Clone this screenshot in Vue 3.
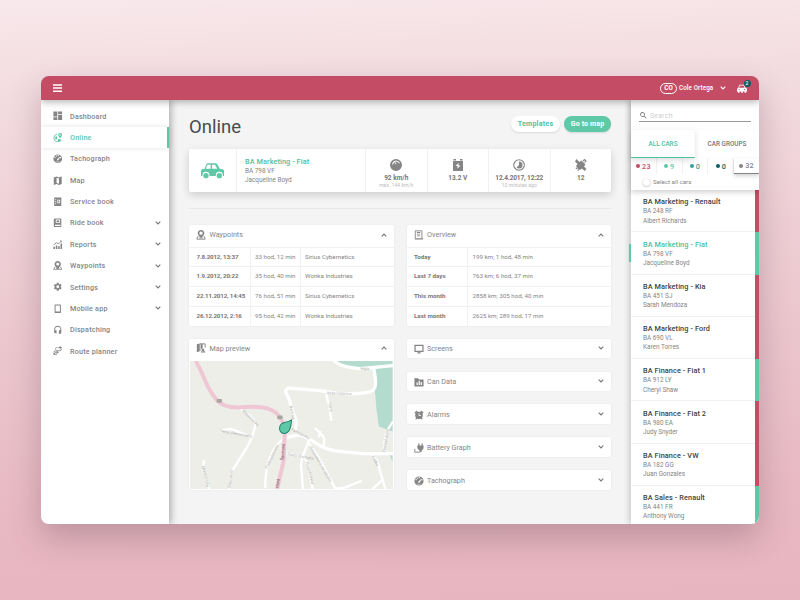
<template>
  <div class="page">
    <div class="window">
      <header class="topbar">
        <svg class="burger" viewBox="0 0 9 8"><path d="M0 .2h9v1.5H0zM0 3.3h9v1.5H0zM0 6.4h9v1.5H0z" /></svg>
        <div class="user">
          <span class="initials">CO</span>
          <span class="user-name">Cole Ortega</span>
          <svg class="chevron white" viewBox="0 0 6 4"><path d="M.7.7 3 3 5.3.7" /></svg>
          <div class="car-alert">
            <svg viewBox="0 0 24 20"><path fill-rule="evenodd" d="M6 1h11l3 7h2l2 3v6h-2v3h-4v-3h-4v3h-4v-3H6v3H2v-3H0v-6l3-3zM7 3 5 8h13l-2-5zM5 11a1.500 1.500 0 1 0 .1 0zM18 11a1.500 1.500 0 1 0 .1 0z" /></svg>
            <span class="alert-count">2</span>
          </div>
        </div>
      </header>

      <div class="body">
        <nav class="sidebar">
          <a v-for="item in menu" :key="item.label" class="nav-item" :class="{ active: item.active }">
            <svg class="icon" viewBox="0 0 24 24">
              <path class="fill" :d="icons[item.icon].fill" />
              <path class="line" :d="icons[item.icon].line" />
            </svg>
            <span class="nav-label">{{ item.label }}</span>
            <svg v-if="item.sub" class="chevron" viewBox="0 0 6 4"><path d="M.7.7 3 3 5.3.7" /></svg>
          </a>
        </nav>

        <main class="content">
          <div class="title-row">
            <h1>Online</h1>
            <button class="btn">Templates</button>
            <button class="btn primary">Go to map</button>
          </div>

          <section class="car-card">
            <div class="car-picture">
              <svg viewBox="0 0 70 47">
                <path d="M0 24q0-6 6-6l5-1 5-13q1-3 5-3h22q4 0 6 3l7 13 8 2q6 1 6 7v13H0z" />
                <path class="hole" d="M19 5h10v12H14.500zM33 5h9l7 12H33z" />
                <circle class="hole" cx="15" cy="37" r="10.500" /><circle class="hole" cx="55" cy="37" r="10.500" />
                <circle cx="15" cy="38" r="8" /><circle cx="55" cy="38" r="8" />
              </svg>
            </div>
            <div class="car-info">
              <strong>BA Marketing - Fiat</strong>
              <span>BA 798 VF</span>
              <span>Jacqueline Boyd</span>
            </div>
            <div v-for="s in stats" :key="s.icon" class="stat">
              <svg class="icon" viewBox="0 0 24 24">
                <path class="fill" :d="icons[s.icon].fill" />
                <path class="line" :d="icons[s.icon].line" />
              </svg>
              <b>{{ s.value }}</b>
              <small>{{ s.note }}</small>
            </div>
          </section>

          <hr />

          <div class="columns">
            <div class="column">
              <section class="panel">
                <div class="panel-head">
                  <svg class="icon" viewBox="0 0 24 24"><path class="fill" :d="icons.waypoint.fill" /><path class="line" :d="icons.waypoint.line" /></svg>
                  <span>Waypoints</span>
                  <svg class="chevron" viewBox="0 0 6 4"><path d="M.7 3.300 3 1 5.300 3.300" /></svg>
                </div>
                <div v-for="w in waypoints" :key="w[0]" class="row three">
                  <b>{{ w[0] }}</b><span>{{ w[1] }}</span><span>{{ w[2] }}</span>
                </div>
              </section>

              <section class="panel map-panel">
                <div class="panel-head">
                  <svg class="icon" viewBox="0 0 24 24"><path class="fill" :d="icons.mapPreview.fill" /><path class="line" :d="icons.mapPreview.line" /></svg>
                  <span>Map preview</span>
                  <svg class="chevron" viewBox="0 0 6 4"><path d="M.7 3.300 3 1 5.300 3.300" /></svg>
                </div>
                <svg class="map" viewBox="30 93 608 383" preserveAspectRatio="none">
                  <path class="park" d="M466 93q20 19 75 22l97-8V93zM584 118l54-10v196l-41-15-7-50-5-58zM630 374h8v22z" />
                  <g class="road">
                    <path class="wide" d="M464 93q16 18 76 23l98-9" />
                    <path class="wide" d="M582 118q6 28 5 46-1 18-22 22-35 8-90 3l-60-8-88-7q-12 2-9 15 12 19 14 34 5 25 15 43 4 9-1 30" />
                    <path class="wide" d="M314 323l41-9q18 2 32 12l38 23q25 13 60 15l65 6h88" />
                    <path d="M438 184q4 30 10 40l6 45M184 238q16 14 28 20 17 14 13 34-10 40-34 75l-39 62-4 47M122 304q20-12 40-5l48 20" />
                    <path d="M314 323q-30 22-41 52-17 32-17 95M387 330l-17 45q-10 20-5 50l4 50M388 340q10 16 25 36l30 55 24 45" />
                    <path d="M325 371l45 8q20 24 18 50l10 47M72 392q-5 28 3 44l12 40M407 295l24 25q4 12 0 26M422 305l-5 14M574 370q22 20 25 48l18 58M606 450l-28 26M544 452l-50 20-25 2M638 276q-25 30-27 87" />
                  </g>
                  <path class="highway" d="M47 93q13 22 24 48 17 43 38 67 20 24 65 24 60-6 92 4 27 8 40 36 10 15 8 51l-3 70q-10 40-20 86" />
                  <g class="shield"><rect x="110" y="207" width="16" height="11" rx="3" /><rect x="292" y="256" width="16" height="11" rx="3" /></g>
                  <text v-for="(l, i) in mapLabels" :key="i" :class="{ dark: l.dark }" :transform="`translate(${l.x} ${l.y}) rotate(${l.r})`">{{ l.t }}</text>
                  <path class="marker" d="M335 269q-1 19-6 30-7 12-18 11-13-3-12-18 2-12 14-15 12-2 22-8z" />
                </svg>
              </section>
            </div>

            <div class="column">
              <section class="panel">
                <div class="panel-head">
                  <svg class="icon" viewBox="0 0 24 24"><path class="fill" :d="icons.overview.fill" /><path class="line" :d="icons.overview.line" /></svg>
                  <span>Overview</span>
                  <svg class="chevron" viewBox="0 0 6 4"><path d="M.7 3.300 3 1 5.300 3.300" /></svg>
                </div>
                <div v-for="o in overview" :key="o[0]" class="row two">
                  <b>{{ o[0] }}</b><span>{{ o[1] }}</span>
                </div>
              </section>
              <section v-for="p in closedPanels" :key="p.label" class="panel closed">
                <div class="panel-head">
                  <svg class="icon" viewBox="0 0 24 24"><path class="fill" :d="icons[p.icon].fill" /><path class="line" :d="icons[p.icon].line" /></svg>
                  <span>{{ p.label }}</span>
                  <svg class="chevron" viewBox="0 0 6 4"><path d="M.7.7 3 3 5.3.7" /></svg>
                </div>
              </section>
            </div>
          </div>
        </main>

        <aside class="cars">
          <div class="cars-head">
            <label class="search">
              <svg viewBox="0 0 24 24"><path d="M15.500 14h-.8l-.3-.3A6.500 6.500 0 1 0 13.700 14.400l.3.3v.8l5 5 1.500-1.500zm-6 0a4.500 4.500 0 1 1 0-9 4.500 4.500 0 0 1 0 9z" /></svg>
              <span>Search</span>
            </label>
            <div class="tabs">
              <span class="tab active">ALL CARS</span>
              <span class="tab">CAR GROUPS</span>
            </div>
            <div class="counts">
              <span v-for="(c, i) in counts" :key="i" class="count" :class="c.type"><i></i>{{ c.n }}</span>
            </div>
            <div class="select-all"><i></i>Select all cars</div>
          </div>
          <div class="car-list">
            <div v-for="c in cars" :key="c.plate" class="car" :class="{ online: c.online, selected: c.selected }">
              <strong>{{ c.name }}</strong>
              <span>{{ c.plate }}</span>
              <span>{{ c.driver }}</span>
            </div>
          </div>
        </aside>
      </div>
    </div>
  </div>
</template>

<script setup>
import { ref } from 'vue';

const gauge = 'M12 1a11 11 0 1 0 0 22 11 11 0 0 0 0-22zM5 10a1.500 1.500 0 1 1 .1 0zM8.500 6.500a1.500 1.500 0 1 1 .1 0zM13 5.500a1.500 1.500 0 1 1 .1 0zM19 10.500a1.500 1.500 0 1 1 .1 0zM10 14l7-7 1 1-5 8q-3 2-3-2zM6 18q6 3 12 0l-2 2q-4 2-8 0z';

const icons = {
  dashboard: { fill: 'M1 1h10v13H1zM1 16h10v7H1zM13 1h10v7H13zM13 10h10v13H13z' },
  online: { fill: 'M18 0a5 5 0 0 0-5 5q0 3 5 8 5-5 5-8a5 5 0 0 0-5-5zm0 3a2 2 0 1 1 0 4 2 2 0 0 1 0-4zM7 8l3 1 1 4-3 4-3-3zM13 15h6v4l-4 3h-3z', line: 'M10 3Q2 5 2 13q1 7 8 9 7 1 11-4' },
  gauge: { fill: gauge },
  map: { fill: 'M20.500 1.500 15 4 9 1.500 2 4v18.500L9 20l6 2.500 7-2.500V1.500zM15 19.500 9 17.500V4.500l6 2z' },
  service: { fill: 'M3 1h18v22H3zM6 5v3h2V5zM6 10v3h2v-3zM6 15v3h2v-3zM11 7v9h7V7zM13 9h3v5h-3z' },
  ride: { fill: 'M5 1h16v22H5q-3 0-3-3V4q0-3 3-3zM7 4v8h11V4zM5 17v3h14v-3zM9 6h7v4H9z' },
  reports: { fill: 'M1 17h4v6H1zM7 14h4v9H7zM13 16h4v7h-4zM19 9h4v14h-4zM17 1h5v5z', line: 'M2 12l7-5 5 3 6-7' },
  waypoint: { fill: 'M12 0C7.500 0 4 3.500 4 8c0 4 3 6 6 10h4c3-4 6-6 6-10 0-4.500-3.500-8-8-8zm0 3.500a4 4 0 1 1 0 8 4 4 0 0 1 0-8z', line: 'M6 16H4l-2 6h20l-2-6h-2M8 19h8' },
  settings: { fill: 'M19.430 12.980c.04-.32.07-.64.07-.98s-.03-.66-.07-.98l2.110-1.650c.19-.15.24-.42.12-.64l-2-3.460c-.12-.22-.39-.3-.61-.22l-2.490 1c-.52-.4-1.080-.73-1.690-.98l-.38-2.650C14.460 2.180 14.250 2 14 2h-4c-.25 0-.46.18-.49.42l-.38 2.650c-.61.25-1.170.59-1.690.98l-2.490-1c-.23-.09-.49 0-.61.22l-2 3.460c-.13.22-.07.49.12.64l2.110 1.650c-.04.32-.07.65-.07.98s.03.66.07.98l-2.110 1.650c-.19.15-.24.42-.12.64l2 3.460c.12.22.39.3.61.22l2.490-1c.52.4 1.080.73 1.690.98l.38 2.650c.03.24.24.42.49.42h4c.25 0 .46-.18.49-.42l.38-2.650c.61-.25 1.170-.59 1.690-.98l2.490 1c.23.09.49 0 .61-.22l2-3.460c.12-.22.07-.49-.12-.64zM12 15.500a3.500 3.500 0 1 1 0-7 3.500 3.500 0 0 1 0 7z' },
  mobile: { fill: 'M6 1h12q2 0 2 2v18q0 2-2 2H6q-2 0-2-2V3q0-2 2-2zM6.500 4v15h11V4z' },
  headset: { fill: 'M12 2c-5 0-9 4-9 9v7c0 1.700 1.300 3 3 3h3v-8H5.500v-2a6.500 6.500 0 0 1 13 0v2H15v8h2l-3 2h3c2.500 0 4-2 4-4v-8c0-5-4-9-9-9z' },
  route: { fill: 'M17 0l6 4-6 4zM9 12l6 4-6 4zM1 17h4v5H1z', line: 'M8 4h3M13 4h5M21 7q1 5-4 5H7q-5 0-5 4M9 16h-4M8 4Q5 5 7 9M5 21h5' },
  speed: { fill: 'M12 0a12 12 0 1 0 0 24 12 12 0 0 0 0-24zM4 11q1-7 8-8 5 0 8 5l-2 1q-2-4-6-4-5 1-6 6zM9 6l4 2-2 3z' },
  battery: { fill: 'M3 0h5v3H3zM16 0h5v3h-5zM2 4h20v20H2zM13 8l-6 6h4v5l6-6h-4z' },
  clock: { fill: 'M12 5v7l-5 5a7 7 0 0 0 5 2 7 7 0 0 0 0-14z', line: 'M12 1.500a10.500 10.500 0 1 0 .1 0z' },
  satellite: { fill: 'M3 0l6 6 4-3 8 8-3 4 5 5-4 4-5-5-4 3-8-8 3-4-5-5z', line: 'M2 20q2-4 5-1 2 3-2 4M16 4l3-3 3 3-3 3' },
  overview: { fill: 'M7 5h8v2H7zM7 9h8v2H7zM7 13h8v2H7zM2 20h20v3H2z', line: 'M3 20V2h16v18' },
  mapPreview: { fill: 'M2 3l7-2v19l-7 2zM11 1l5 2v9h-2v8l-3-1zM16 13a4 4 0 1 1-.1 0zM12 20h10v3H12z', line: 'M9 2h13v9' },
  screens: { fill: 'M1 2h22v17H1zM4 5v11h16V5zM8 20h8v3H8z' },
  data: { fill: 'M1 3h9l2 3h11v17H1zM6 13v6h3v-6zM11 9v10h3V9zM16 12v7h3v-7z' },
  alarm: { fill: 'M1 6l6-5 2 3-6 5zM23 6l-6-5-2 3 6 5zM12 4a9 9 0 0 1 7 15l2 3-2 1-3-2q-4 2-8 0l-3 2-2-1 2-3a9 9 0 0 1 7-15zM11 8v6h6v-2h-4V8z' },
  plug: { fill: 'M10 1h3v5h5V1h3v5h2v5q0 5-4 6v4h-6v-4q-5-1-5-6V6h2z', line: 'M2 14v8h13' },
};

const menu = ref([
  { label: 'Dashboard', icon: 'dashboard' },
  { label: 'Online', icon: 'online', active: true },
  { label: 'Tachograph', icon: 'gauge' },
  { label: 'Map', icon: 'map' },
  { label: 'Service book', icon: 'service' },
  { label: 'Ride book', icon: 'ride', sub: true },
  { label: 'Reports', icon: 'reports', sub: true },
  { label: 'Waypoints', icon: 'waypoint', sub: true },
  { label: 'Settings', icon: 'settings', sub: true },
  { label: 'Mobile app', icon: 'mobile', sub: true },
  { label: 'Dispatching', icon: 'headset' },
  { label: 'Route planner', icon: 'route' },
]);

const stats = ref([
  { icon: 'speed', value: '92 km/h', note: 'max. 144 km/h' },
  { icon: 'battery', value: '13.2 V', note: '' },
  { icon: 'clock', value: '12.4.2017, 12:22', note: '10 minutes ago' },
  { icon: 'satellite', value: '12', note: '' },
]);

const waypoints = [
  ['7.8.2012, 13:37', '33 hod, 12 min', 'Sirius Cybernetics'],
  ['1.9.2012, 20:22', '35 hod, 40 min', 'Wonka Industries'],
  ['22.11.2012, 14:45', '76 hod, 51 min', 'Sirius Cybernetics'],
  ['26.12.2012, 2:16', '95 hod, 42 min', 'Wonka Industries'],
];

const overview = [
  ['Today', '199 km; 1 hod, 48 min'],
  ['Last 7 days', '763 km; 6 hod, 37 min'],
  ['This month', '2858 km; 305 hod, 40 min'],
  ['Last month', '2625 km; 289 hod, 17 min'],
];

const closedPanels = [
  { label: 'Screens', icon: 'screens' },
  { label: 'Can Data', icon: 'data' },
  { label: 'Alarms', icon: 'alarm' },
  { label: 'Battery Graph', icon: 'plug' },
  { label: 'Tachograph', icon: 'gauge' },
];

const mapLabels = [
  { t: 'Hájik', x: 542, y: 121, r: 0 },
  { t: 'Jurija Gagarina', x: 438, y: 191, r: 3 },
  { t: 'Tichá', x: 445, y: 217, r: 80 },
  { t: 'Banícka', x: 329, y: 228, r: 78 },
  { t: 'Mládežnícka', x: 186, y: 243, r: 45 },
  { t: 'Petra Jilemnického', x: 120, y: 306, r: 10 },
  { t: 'Podhradzovská', x: 262, y: 416, r: -64 },
  { t: 'Partizánska', x: 333, y: 300, r: 27 },
  { t: 'Pavla Országha', x: 323, y: 375, r: 10 },
  { t: 'Hviezdoslava', x: 378, y: 396, r: 76 },
  { t: 'Slovenského národného', x: 388, y: 350, r: 60 },
  { t: 'Mládežnícka', x: 65, y: 408, r: 76 },
  { t: 'Železničná', x: 151, y: 474, r: -82 },
  { t: 'Krátka', x: 576, y: 378, r: 66 },
  { t: 'Pod kalváriou', x: 615, y: 366, r: -80 },
  { t: 'Športová', x: 310, y: 391, r: -85, dark: true },
  { t: 'rtová', x: 295, y: 474, r: -82, dark: true },
];

const counts = [
  { n: 23, type: 'red' },
  { n: 9, type: 'green' },
  { n: 0, type: 'teal' },
  { n: 0, type: 'deep' },
  { n: 32, type: 'all' },
];

const cars = ref([
  { name: 'BA Marketing - Renault', plate: 'BA 248 RF', driver: 'Albert Richards' },
  { name: 'BA Marketing - Fiat', plate: 'BA 798 VF', driver: 'Jacqueline Boyd', online: true, selected: true },
  { name: 'BA Marketing - Kia', plate: 'BA 451 SJ', driver: 'Sarah Mendoza' },
  { name: 'BA Marketing - Ford', plate: 'BA 690 VL', driver: 'Karen Torres' },
  { name: 'BA Finance - Fiat 1', plate: 'BA 912 LY', driver: 'Cheryl Shaw', online: true },
  { name: 'BA Finance - Fiat 2', plate: 'BA 980 EA', driver: 'Judy Snyder' },
  { name: 'BA Finance - VW', plate: 'BA 182 GG', driver: 'Juan Gonzales' },
  { name: 'BA Sales - Renault', plate: 'BA 441 FR', driver: 'Anthony Wong', online: true },
]);
</script>

<style>
body {
  margin: 0;
}
</style>

<style scoped>
* {
  box-sizing: border-box;
}
.page {
  width: 800px;
  height: 600px;
  overflow: hidden;
  padding: 76px 41px;
  background: linear-gradient(178deg, #f8e8eb 0%, #f3dde1 14%, #ecc9d0 50%, #e8b9c3 82%, #e7b5bf 100%);
  font-family: Roboto, "Noto Sans", sans-serif;
  color: #858585;
}
.window {
  height: 448px;
  border-radius: 8px;
  box-shadow: 0 14px 32px rgba(90, 60, 75, 0.3);
  overflow: hidden;
  background: #f4f4f4;
  display: flex;
  flex-direction: column;
}
svg {
  display: block;
}
.topbar {
  height: 24px;
  flex: none;
  background: #c54c65;
  display: flex;
  align-items: center;
  justify-content: space-between;
  padding: 0 10px 0 12px;
  position: relative;
  z-index: 3;
  box-shadow: 0 2px 7px rgba(0, 0, 0, 0.3);
}
.burger {
  width: 9px;
  height: 8px;
  fill: #fff;
}
.user {
  display: flex;
  align-items: center;
  color: #fff;
  font-size: 6.300px;
  font-weight: 500;
}
.initials {
  width: 17px;
  height: 11px;
  line-height: 9px;
  border: 1px solid #fff;
  border-radius: 6px;
  text-align: center;
  font-weight: 700;
  margin-right: 2px;
}
.user-name {
  width: 35px;
  letter-spacing: 0.080px;
  white-space: nowrap;
}
.user .chevron {
  margin: 0 11px 0 6px;
}
.car-alert {
  position: relative;
  width: 12px;
}
.car-alert svg {
  width: 10px;
  height: 9px;
  margin-top: 1px;
  fill: #fff;
}
.alert-count {
  position: absolute;
  left: 6.500px;
  top: -3px;
  width: 7px;
  height: 7px;
  border-radius: 50%;
  background: #0d5c63;
  font-size: 5px;
  line-height: 7px;
  text-align: center;
}
.chevron {
  width: 6px;
  height: 4px;
  fill: none;
  stroke: #777;
  stroke-width: 1.100;
}
.chevron.white {
  stroke: #fff;
}
.icon .fill {
  fill: currentColor;
  fill-rule: evenodd;
}
.icon .line {
  fill: none;
  stroke: currentColor;
  stroke-width: 2.200;
}
.body {
  flex: 1;
  min-height: 0;
  display: flex;
}

/* left menu */
.sidebar {
  width: 128px;
  flex: none;
  background: #fff;
  padding-top: 5.500px;
  position: relative;
  z-index: 2;
  box-shadow: 2px 0 7px rgba(0, 0, 0, 0.3);
}
.nav-item {
  height: 21.370px;
  display: flex;
  align-items: center;
  padding: 0 8px 0 12px;
  font-size: 7.200px;
  font-weight: 500;
  letter-spacing: 0.200px;
}
.nav-item .icon {
  width: 9.500px;
  height: 9.500px;
  margin-right: 7.500px;
}
.nav-label {
  flex: 1;
}
.nav-item.active {
  color: #5cc7a3;
  border-right: 2px solid #5cc7a3;
  box-shadow: 0 0 5px rgba(0, 0, 0, 0.12);
}

/* main column */
.content {
  width: 462px;
  flex: none;
  padding: 15px 20px 0;
}
.title-row {
  display: flex;
  align-items: center;
  height: 18px;
}
h1 {
  flex: 1;
  margin: 6px 0 0;
  font-size: 18.500px;
  line-height: 24px;
  font-weight: 400;
  color: #4a4a4a;
}
.btn {
  width: 49px;
  height: 16px;
  padding: 0;
  margin-left: 4px;
  border: 0;
  border-radius: 8px;
  background: #fff;
  color: #4ec19b;
  font: 700 7px Roboto, sans-serif;
  letter-spacing: 0.260px;
  box-shadow: 0 1px 2px rgba(0, 0, 0, 0.12);
}
.btn.primary {
  width: 47px;
  background: #5fc9a7;
  color: #fff;
  letter-spacing: 0.150px;
}
.car-card {
  margin-top: 16px;
  height: 43px;
  display: flex;
  background: #fff;
  border-radius: 2px;
  box-shadow: 0 3px 8px rgba(0, 0, 0, 0.16);
}
.car-picture {
  width: 47px;
  padding: 14px 0 0 12px;
}
.car-picture svg {
  width: 23.300px;
  height: 15.700px;
  fill: #5fc9a7;
}
.car-picture .hole {
  fill: #fff;
}
.car-info {
  width: 129px;
  border-left: 1px solid #f1f1f1;
  padding: 7.500px 0 0 8px;
  display: flex;
  flex-direction: column;
  font-size: 6.400px;
  line-height: 9.200px;
}
.car-info strong {
  font-size: 7.300px;
  line-height: 10px;
  font-weight: 500;
  letter-spacing: 0.080px;
  color: #4ec19b;
}
.stat {
  width: 61.500px;
  border-left: 1px solid #f1f1f1;
  display: flex;
  flex-direction: column;
  align-items: center;
  padding-top: 10px;
  white-space: nowrap;
}
.stat .icon {
  width: 12px;
  height: 12px;
}
.stat b {
  font-size: 6.500px;
  line-height: 9px;
  margin-top: 2.500px;
  color: #777;
}
.stat:nth-child(5) b {
  letter-spacing: -0.120px;
}
.stat small {
  font-size: 5.100px;
  line-height: 5px;
  color: #bdbdbd;
}
hr {
  width: 100%;
  height: 1px;
  margin: 16px 0;
  border: 0;
  background: #e8e8e8;
}
.columns {
  display: flex;
  gap: 13px;
}
.column {
  width: 204.500px;
}
.panel {
  background: #fff;
  border-radius: 2px;
  box-shadow: 0 0 2px rgba(0, 0, 0, 0.08);
  margin-bottom: 13px;
  overflow: hidden;
}
.panel-head {
  height: 21.500px;
  display: flex;
  align-items: center;
  padding: 0 7px 2px;
  font-size: 7.200px;
}
.panel-head .icon {
  width: 10px;
  height: 10px;
  margin-right: 3.500px;
}
.panel-head span {
  flex: 1;
}
.row {
  height: 19.800px;
  display: grid;
  border-top: 1px solid #f1f1f1;
  font-size: 6.200px;
  line-height: 19px;
  white-space: nowrap;
}
.row > * {
  padding-left: 4.500px;
}
.row > * + * {
  border-left: 1px solid #f1f1f1;
}
.row > b {
  padding-left: 7.500px;
  color: #777;
  font-weight: 700;
}
.three {
  grid-template-columns: 60.500px 50px 1fr;
}
.three b {
  letter-spacing: -0.140px;
}
.two {
  grid-template-columns: 60.500px 1fr;
}
.closed {
  height: 19.500px;
  margin-bottom: 13.400px;
}
.closed .panel-head {
  height: 19.500px;
  padding-bottom: 0;
}
.closed .icon {
  margin-top: 2px;
}
.map-panel {
  padding: 0 1px 1px;
}
.map-panel .panel-head {
  padding: 0 6px 2px;
}
.map {
  width: 202.500px;
  height: 128px;
  margin-top: 1px;
  background: #eeeee9;
}
.park {
  fill: #b3dccf;
}
.road path {
  fill: none;
  stroke: #fff;
  stroke-width: 7;
  stroke-linecap: round;
}
.road .wide {
  stroke-width: 10;
}
.highway {
  fill: none;
  stroke: #efc6d4;
  stroke-width: 12;
}
.shield {
  fill: #aaa7a2;
}
.map text {
  font-size: 11.500px;
  fill: #b0afad;
}
.map .dark {
  font-size: 12.500px;
  fill: #75505d;
}
.marker {
  fill: #5fc9a7;
  stroke: #22826b;
  stroke-width: 3;
}

/* right column with cars */
.cars {
  width: 128px;
  flex: none;
  background: #fff;
  box-shadow: -2px 0 6px rgba(0, 0, 0, 0.18);
  position: relative;
  z-index: 1;
}
.cars-head {
  height: 90px;
  background: #fff;
  position: relative;
  z-index: 1;
  box-shadow: 0 2px 6px rgba(0, 0, 0, 0.2);
}
.search {
  display: flex;
  align-items: center;
  height: 12px;
  margin: 0 8px;
  position: relative;
  top: 10px;
  border-bottom: 1px solid #999;
  font-size: 7px;
  letter-spacing: 0.200px;
  color: #cfcfcf;
}
.search svg {
  width: 9px;
  height: 9px;
  margin-right: 2px;
  fill: #777;
}
.tabs {
  margin-top: 18px;
  height: 28px;
  display: flex;
  font-size: 6.400px;
  font-weight: 500;
}
.tab {
  width: 50%;
  line-height: 28.500px;
  text-align: center;
  color: #777;
  box-shadow: 0 0 3px rgba(0, 0, 0, 0.04);
}
.tab.active {
  color: #4ec19b;
  border-bottom: 1px solid #4ec19b;
  box-shadow: 0 2px 6px rgba(0, 0, 0, 0.14);
  position: relative;
  z-index: 1;
}
.counts {
  height: 16px;
  display: flex;
  font-size: 7.200px;
  font-weight: 500;
  letter-spacing: 0.200px;
}
.count {
  flex: 1;
  display: flex;
  align-items: center;
  justify-content: center;
  border-right: 1px solid #f1f1f1;
}
.count i {
  width: 4px;
  height: 4px;
  border-radius: 50%;
  background: currentColor;
  margin-right: 2px;
}
.red { color: #c54c65; }
.green { color: #5fc9a7; }
.teal { color: #35a09c; }
.deep { color: #0d5c63; }
.count.all {
  border: 0;
  border-bottom: 1px solid #858585;
  box-shadow: 0 2px 4px rgba(0, 0, 0, 0.18);
}
.select-all {
  height: 16px;
  padding-left: 12px;
  display: flex;
  align-items: center;
  font-size: 6.200px;
}
.select-all i {
  width: 7px;
  height: 7px;
  margin-right: 3px;
  border-radius: 50%;
  background: #fff;
  box-shadow: 0 0.500px 2px rgba(0, 0, 0, 0.35);
}
.car {
  position: relative;
  height: 42.250px;
  padding: 7.300px 0 0 12px;
  border-right: 4.500px solid #c54c65;
  display: flex;
  flex-direction: column;
  font-size: 6.400px;
  line-height: 9.200px;
  box-shadow: inset 0 -1px #f1f1f1;
}
.car strong {
  font-size: 7.300px;
  line-height: 10px;
  font-weight: 500;
  color: #424242;
  letter-spacing: 0.100px;
}
.car.online {
  border-right-color: #5fc9a7;
}
.car.selected strong {
  color: #4ec19b;
}
.car.selected::before {
  content: "";
  position: absolute;
  left: -2px;
  top: 12px;
  width: 2px;
  height: 18px;
  background: #5fc9a7;
}
</style>
